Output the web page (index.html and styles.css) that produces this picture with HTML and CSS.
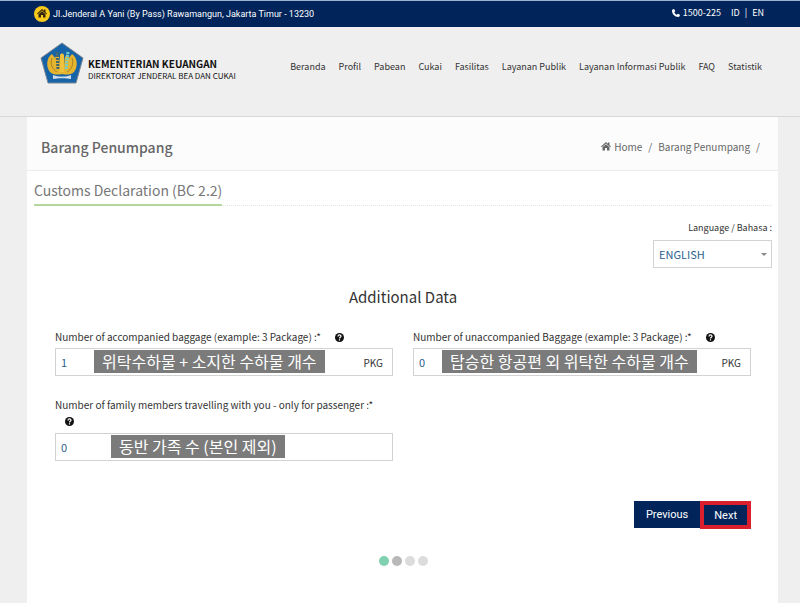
FILE: index.html
```html
<!DOCTYPE html>
<html lang="id">
<head>
    <meta charset="UTF-8">
    <meta name="viewport" content="width=device-width, initial-scale=1.0">
    <title>Barang Penumpang - Kementerian Keuangan</title>
    <link rel="stylesheet" href="styles.css">
</head>
<body>
    <div class="topbar">
        <div class="address">
            <span class="home-badge">
                <svg width="10" height="9" viewBox="0 0 20 18"><path fill="currentColor" d="M10 0 0 9l1.500 1.500L10 3l8.500 7.500L20 9l-3-2.700V1h-3v2.600zM10 4.500 3 10.500V17h5v-5h4v5h5v-6.500z"/></svg>
            </span>
            <span class="street">Jl.Jenderal A Yani (By Pass) Rawamangun, Jakarta Timur - 13230</span>
        </div>
        <div class="contact">
            <svg width="8" height="8" viewBox="0 0 16 16"><path fill="currentColor" d="M4.300 0 1.300.9C.3 1.300 0 2.500 0 3.500 0 10 6 16 12.500 16c1 0 2.300-.3 2.600-1.300l.9-3-4.300-2.200-2 2C7.500 10.500 5.500 8.500 4.500 6.300l2-2z"/></svg>
            <span class="phone">1500-225</span>
            <a href="#">ID</a>
            <span class="divider">|</span>
            <a href="#">EN</a>
        </div>
    </div>

    <header class="header">
        <a class="brand" href="#">
            <svg width="44" height="42" viewBox="0 0 44 42">
                <path fill="#1763a8" stroke="#7c8790" stroke-width="1" d="M22 1 43 16 36 41H8L1 16z"/>
                <path fill="#e5b52f" d="M12 12C6 16 6 25 10 30c3 3 8 3 12 2V20l-5-8-2 4zM32 12c6 4 6 13 2 18-3 3-8 3-12 2V20l5-8 2 4z"/>
                <path fill="none" stroke="#a87f24" stroke-width="1" d="M12 16c-2 6 0 11 5 14M32 16c2 6 0 11-5 14"/>
                <path fill="#1763a8" d="M19 12h6l-1 12h-4z"/>
                <path fill="#f0c23c" d="M20 13c1-2 3-2 4 0v17h-4z"/>
                <path fill="none" stroke="#3f6571" stroke-width="3" stroke-dasharray="2 1" d="M17 10l1 18"/>
                <path fill="none" stroke="#6fd0cf" stroke-width="3" stroke-dasharray="2 1" d="M28 10l-2 18"/>
                <path fill="#cfdcea" d="M13 33c5 2 13 2 18 0v4c-5-1-13-1-18 0z"/>
            </svg>
            <span class="brand-text">
                <strong>KEMENTERIAN KEUANGAN</strong>
                <span>DIREKTORAT JENDERAL BEA DAN CUKAI</span>
            </span>
        </a>
        <nav class="menu">
            <a href="#">Beranda</a>
            <a href="#">Profil</a>
            <a href="#">Pabean</a>
            <a href="#">Cukai</a>
            <a href="#">Fasilitas</a>
            <a href="#">Layanan Publik</a>
            <a href="#">Layanan Informasi Publik</a>
            <a href="#">FAQ</a>
            <a href="#">Statistik</a>
        </nav>
    </header>

    <main class="page">
        <div class="page-title">
            <h1>Barang Penumpang</h1>
            <div class="breadcrumb">
                <svg width="10" height="9" viewBox="0 0 20 18"><path fill="currentColor" d="M10 0 0 9l1.500 1.500L10 3l8.500 7.500L20 9l-3-2.700V1h-3v2.600zM10 4.500 3 10.500V17h5v-5h4v5h5v-6.500z"/></svg>
                <a href="#">Home</a>
                <span>/</span>
                <a href="#">Barang Penumpang</a>
                <span>/</span>
            </div>
        </div>

        <div class="content">
            <div class="headline">
                <h2>Customs Declaration (BC 2.2)</h2>
            </div>

            <div class="language">
                <label for="language">Language / Bahasa :</label>
                <div class="select-wrap">
                    <select id="language">
                        <option>ENGLISH</option>
                        <option>INDONESIA</option>
                    </select>
                </div>
            </div>

            <form class="form">
                <h3>Additional Data</h3>
                <div class="fields">
                    <div class="field">
                        <div class="label-row">
                            <label for="accompanied">Number of accompanied baggage (example: 3 Package) :*</label>
                            <svg class="help" width="9" height="9" viewBox="0 0 18 18"><circle cx="9" cy="9" r="9" fill="#111"/><path fill="none" stroke="#fff" stroke-width="2.400" d="M6 7c0-4 6-4 6-.5C12 8.500 9 8.500 9 11M9 12.500V15"/></svg>
                        </div>
                        <div class="input-wrap">
                            <input id="accompanied" type="text" value="1">
                            <span class="unit">PKG</span>
                            <span class="note note-accompanied">위탁수하물 + 소지한 수하물 개수</span>
                        </div>
                    </div>
                    <div class="field">
                        <div class="label-row">
                            <label for="unaccompanied">Number of unaccompanied Baggage (example: 3 Package) :*</label>
                            <svg class="help" width="9" height="9" viewBox="0 0 18 18"><circle cx="9" cy="9" r="9" fill="#111"/><path fill="none" stroke="#fff" stroke-width="2.400" d="M6 7c0-4 6-4 6-.5C12 8.500 9 8.500 9 11M9 12.500V15"/></svg>
                        </div>
                        <div class="input-wrap">
                            <input id="unaccompanied" type="text" value="0">
                            <span class="unit">PKG</span>
                            <span class="note note-unaccompanied">탑승한 항공편 외 위탁한 수하물 개수</span>
                        </div>
                    </div>
                    <div class="field">
                        <div class="label-row wrap">
                            <label for="family">Number of family members travelling with you - only for passenger :*</label>
                            <svg class="help" width="9" height="9" viewBox="0 0 18 18"><circle cx="9" cy="9" r="9" fill="#111"/><path fill="none" stroke="#fff" stroke-width="2.400" d="M6 7c0-4 6-4 6-.5C12 8.500 9 8.500 9 11M9 12.500V15"/></svg>
                        </div>
                        <div class="input-wrap">
                            <input id="family" type="text" value="0">
                            <span class="note note-family">동반 가족 수 (본인 제외)</span>
                        </div>
                    </div>
                </div>
                <div class="actions">
                    <button type="button" class="btn">Previous</button>
                    <button type="button" class="btn btn-next">Next</button>
                </div>
            </form>

            <div class="steps">
                <span class="step done"></span>
                <span class="step current"></span>
                <span class="step"></span>
                <span class="step"></span>
            </div>
        </div>
    </main>
</body>
</html>
```

FILE: styles.css
```css
* {
    box-sizing: border-box;
}

body {
    margin: 0;
    min-height: 100vh;
    display: flex;
    flex-direction: column;
    background: #efefef;
    color: #333;
    font-family: "Noto Sans CJK KR", "Open Sans", sans-serif;
    font-size: 10px;
    line-height: 16px;
}

a {
    color: inherit;
    text-decoration: none;
}

h1, h2, h3 {
    margin: 0;
    font-weight: 400;
}

svg {
    display: block;
    flex: none;
}

.topbar {
    display: flex;
    justify-content: space-between;
    height: 27px;
    padding: 0 36px 0 34px;
    border-top: 1px solid #9db4d0;
    background: #01255b;
    color: #fff;
    font-size: 9px;
}

.address,
.contact {
    display: flex;
    align-items: center;
    gap: 3px;
}

.address {
    padding-bottom: 1px;
}

.street {
    font-family: Roboto, sans-serif;
}

.contact {
    padding-bottom: 3px;
}

.home-badge {
    display: flex;
    align-items: center;
    justify-content: center;
    width: 16px;
    height: 16px;
    border-radius: 50%;
    background: #f9c91c;
    color: #33260a;
}

.phone {
    margin-right: 7px;
}

.divider {
    margin: 0 2px;
}

.header {
    display: flex;
    justify-content: space-between;
    height: 90px;
    padding: 15px 38px 0 40px;
    border-bottom: 1px solid #d9d9d9;
}

.brand {
    display: flex;
    align-items: flex-start;
    gap: 4px;
}

.brand-text {
    display: flex;
    flex-direction: column;
    padding-top: 16px;
    color: #111;
    font-size: 8px;
    line-height: 12px;
    white-space: nowrap;
}

.brand-text strong {
    font-size: 10px;
}

.menu {
    display: flex;
    gap: 13px;
    padding-top: 17px;
    font-size: 9px;
    white-space: nowrap;
}

.page {
    flex: 1;
    margin: 0 22px 0 27px;
    background: #fff;
}

.page-title {
    display: flex;
    align-items: center;
    justify-content: space-between;
    height: 54px;
    padding: 6px 18px 0 14px;
    border-bottom: 1px solid #ececec;
    background: #fcfcfc;
    color: #666;
}

.page-title h1 {
    font-size: 14px;
    font-weight: 500;
}

.breadcrumb {
    display: flex;
    align-items: center;
    gap: 6px;
}

.breadcrumb svg {
    margin-right: -3px;
}

.content {
    padding: 8px 6px 0 7px;
}

.headline {
    display: flex;
    border-bottom: 1px dotted #e2e2e2;
}

.headline h2 {
    margin-bottom: -1px;
    padding-bottom: 3px;
    border-bottom: 2px solid #b4d79d;
    color: #777;
    font-size: 14px;
    line-height: 22px;
}

.language {
    display: flex;
    flex-direction: column;
    align-items: flex-end;
    gap: 4px;
    padding-top: 14px;
    font-size: 9px;
}

.select-wrap {
    position: relative;
    width: 119px;
}

.select-wrap::after {
    content: "";
    position: absolute;
    top: 13px;
    right: 5px;
    border: 3px solid transparent;
    border-top-color: #888;
}

select,
input {
    display: block;
    width: 100%;
    height: 28px;
    padding: 0 5px;
    border: 1px solid #d2d2d2;
    border-radius: 0;
    background: #fff;
    color: #2b5f8e;
    font: inherit;
    font-size: 11px;
}

select {
    appearance: none;
}

.form {
    padding: 18px 21px 0;
}

.form h3 {
    font-size: 15px;
    line-height: 22px;
    text-align: center;
}

.fields {
    display: grid;
    grid-template-columns: repeat(2, minmax(0, 1fr));
    gap: 21px 20px;
    padding-top: 21px;
}

.label-row {
    display: flex;
    align-items: center;
    gap: 14px;
    padding-bottom: 3px;
    white-space: nowrap;
}

.label-row.wrap {
    flex-direction: column;
    align-items: flex-start;
    gap: 4px;
    padding-bottom: 7px;
}

.label-row.wrap .help {
    margin-left: 10px;
}

.input-wrap {
    position: relative;
}

.unit {
    position: absolute;
    top: 7px;
    right: 10px;
}

/* Korean hints shown over the inputs */
.note {
    position: absolute;
    top: 2px;
    height: 23px;
    padding: 0 8px;
    background: #7b7b7b;
    color: #fff;
    font-size: 16px;
    line-height: 23px;
    white-space: nowrap;
}

.note-accompanied {
    left: 39px;
}

.note-unaccompanied {
    left: 29px;
}

.note-family {
    left: 56px;
}

.actions {
    display: flex;
    justify-content: flex-end;
    align-items: flex-start;
    padding-top: 40px;
}

.btn {
    height: 27px;
    padding: 0 12px;
    border: 0;
    background: #01255b;
    color: #fff;
    font-family: Roboto, sans-serif;
    font-size: 11px;
}

.btn-next {
    height: 28px;
    padding: 0 10px;
    border: 4px solid #d9202c;
}

.steps {
    display: flex;
    justify-content: center;
    gap: 3px;
    padding-top: 27px;
}

.step {
    width: 10px;
    height: 10px;
    border-radius: 50%;
    background: #dcdcdc;
}

.step.done {
    background: #80d0b1;
}

.step.current {
    background: #b8b8b8;
}
```
